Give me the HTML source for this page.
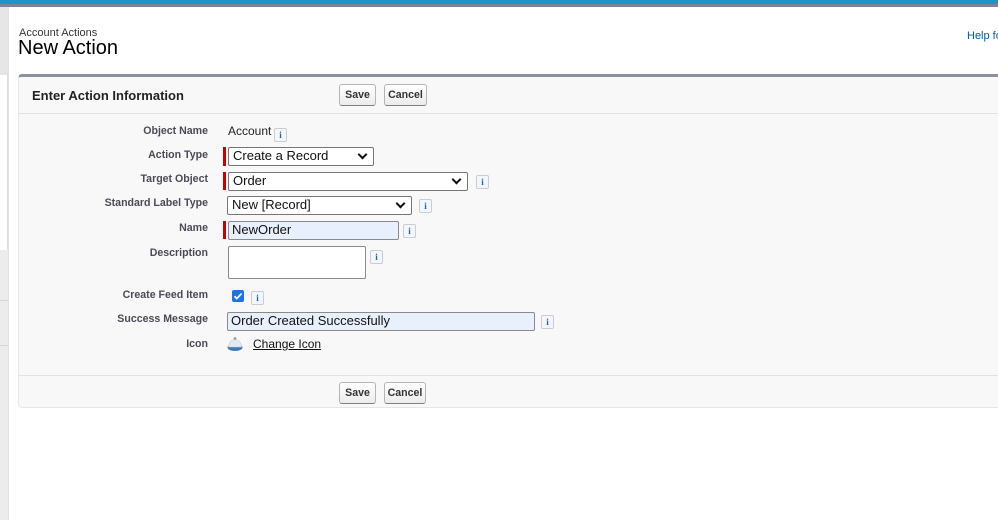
<!DOCTYPE html>
<html><head><meta charset="utf-8"><style>
*{box-sizing:border-box;margin:0;padding:0}
body{width:998px;height:520px;overflow:hidden;background:#fff;font-family:"Liberation Sans",Arial,sans-serif;position:relative;color:#000}
.a{position:absolute}
.lbl{position:absolute;right:790px;font-size:10.6px;font-weight:bold;color:#4a4a56;text-align:right;white-space:nowrap}
.btn{position:absolute;height:22px;border:1px solid #b5b5b5;border-bottom-color:#7f7f7f;border-radius:3px;background:linear-gradient(#fff,#ececec);font-size:10.6px;font-weight:bold;color:#333;text-align:center;line-height:20px}
.info{position:absolute;width:13px;height:14px;border:1px solid #c9ccd2;border-radius:2px;background:#f3f6fa;color:#1a66b3;font:bold 9px "Liberation Serif",serif;text-align:center;line-height:12px}
.sel{position:absolute;border:1px solid #767676;border-radius:2px;background:#fff;font-size:13px;padding-left:4px;line-height:16px;color:#111}
.sel:after{content:"";position:absolute;right:7px;top:3px;width:5px;height:5px;border-right:2px solid #111;border-bottom:2px solid #111;transform:rotate(45deg)}
.req{position:absolute;width:3px;background:#c00}
.inp{position:absolute;border:1px solid #8a8a8a;border-radius:2px;background:#e8f0fe;font-size:13px;padding-left:3px;line-height:16px;color:#111}
</style></head><body>
<div class="a" style="left:0;top:0;width:998px;height:4px;background:#1b96c4"></div>
<div class="a" style="left:0;top:4px;width:998px;height:3px;background:#7d8595"></div>
<div class="a" style="left:0;top:7px;width:8px;height:68px;background:#e6e6e6"></div>
<div class="a" style="left:0;top:75px;width:8px;height:175px;background:#fff;border-right:1px solid #ddd"></div>
<div class="a" style="left:0;top:250px;width:8px;height:270px;background:#ececec"></div>
<div class="a" style="left:0;top:300px;width:8px;height:1px;background:#d6d6d6"></div>
<div class="a" style="left:0;top:345px;width:8px;height:1px;background:#d6d6d6"></div>
<div class="a" style="left:8px;top:7px;width:1px;height:513px;background:#e0e0e0"></div>

<div class="a" style="left:19px;top:27px;font-size:11px;color:#333;white-space:nowrap">Account Actions</div>
<div class="a" style="left:18px;top:37px;font-size:20px;color:#000;white-space:nowrap">New Action</div>
<div class="a" style="left:967px;top:30px;font-size:11px;color:#015ba7;white-space:nowrap">Help fo</div>

<div class="a" style="left:18px;top:74px;width:990px;height:334px;background:#f8f8f8;border:1px solid #e6e6e6;border-top:3px solid #8a91a0;border-radius:4px 0 0 4px"></div>
<div class="a" style="left:19px;top:113px;width:980px;height:1px;background:#e2e2e2"></div>
<div class="a" style="left:19px;top:375px;width:980px;height:1px;background:#e2e2e2"></div>
<div class="a" style="left:32px;top:88px;font-size:13px;font-weight:bold;color:#222">Enter Action Information</div>
<div class="btn" style="left:339px;top:84px;width:37px">Save</div>
<div class="btn" style="left:384px;top:84px;width:43px">Cancel</div>

<div class="lbl" style="top:125px">Object Name</div>
<div class="a" style="left:228px;top:124px;font-size:12px;color:#222">Account</div>
<div class="info" style="left:274px;top:128px">i</div>

<div class="lbl" style="top:149px">Action Type</div>
<div class="req" style="left:223px;top:147px;height:19px"></div>
<div class="sel" style="left:228px;top:147px;width:146px;height:19px">Create a Record</div>

<div class="lbl" style="top:173px">Target Object</div>
<div class="req" style="left:223px;top:172px;height:18px"></div>
<div class="sel" style="left:228px;top:172px;width:240px;height:19px">Order</div>
<div class="info" style="left:476px;top:175px">i</div>

<div class="lbl" style="top:197px">Standard Label Type</div>
<div class="sel" style="left:227px;top:196px;width:185px;height:19px">New [Record]</div>
<div class="info" style="left:419px;top:199px">i</div>

<div class="lbl" style="top:222px">Name</div>
<div class="req" style="left:223px;top:221px;height:18px"></div>
<div class="inp" style="left:228px;top:221px;width:171px;height:19px">NewOrder</div>
<div class="info" style="left:403px;top:224px">i</div>

<div class="lbl" style="top:247px">Description</div>
<div class="a" style="left:228px;top:246px;width:138px;height:33px;border:1px solid #8a8a8a;border-radius:2px;background:#fff"></div>
<div class="info" style="left:370px;top:250px">i</div>

<div class="lbl" style="top:289px">Create Feed Item</div>
<div class="a" style="left:232px;top:290px;width:12px;height:12px;background:#1a73e8;border-radius:2px"><svg width="12" height="12" viewBox="0 0 12 12" style="display:block"><path d="M2.5 6.2l2.3 2.3 4.8-5" stroke="#fff" stroke-width="1.8" fill="none"/></svg></div>
<div class="info" style="left:251px;top:291px">i</div>

<div class="lbl" style="top:313px">Success Message</div>
<div class="inp" style="left:227px;top:312px;width:308px;height:19px">Order Created Successfully</div>
<div class="info" style="left:541px;top:315px">i</div>

<div class="lbl" style="top:338px">Icon</div>
<svg class="a" style="left:227px;top:335px" width="16" height="17" viewBox="0 0 16 17"><ellipse cx="8" cy="12.5" rx="7.5" ry="3.5" fill="#3f78b8"/><path d="M1.5 12a6.5 7.5 0 0 1 13 0z" fill="#e4e9f0" stroke="#c5ccd6" stroke-width=".6"/><circle cx="8" cy="3.5" r="1.4" fill="#99a"/></svg>
<div class="a" style="left:253px;top:337px;font-size:12px;color:#111;text-decoration:underline">Change Icon</div>

<div class="btn" style="left:339px;top:382px;width:37px">Save</div>
<div class="btn" style="left:384px;top:382px;width:42px">Cancel</div>
</body></html>
